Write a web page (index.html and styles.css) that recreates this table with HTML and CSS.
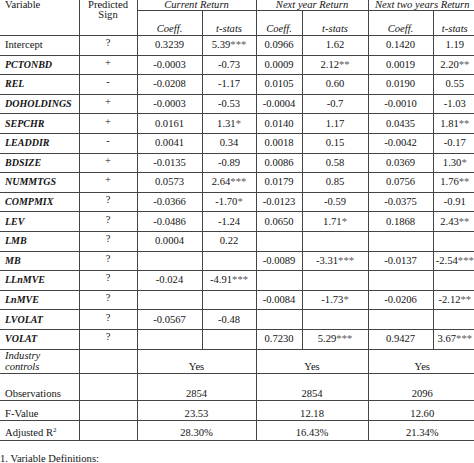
FILE: index.html
```html
<!DOCTYPE html>
<html lang="en">
<head>
<meta charset="utf-8">
<title>Regression results</title>
<link rel="stylesheet" href="styles.css">
</head>
<body>
<table class="results">
  <colgroup>
    <col class="c-var"><col class="c-sign">
    <col class="c-3"><col class="c-4">
    <col class="c-5"><col class="c-6">
    <col class="c-7"><col class="c-8">
  </colgroup>
  <thead>
    <tr class="h1">
      <th rowspan="2" class="var">Variable</th>
      <th rowspan="2" class="sign-h">Predicted<br>Sign</th>
      <th colspan="2" class="grp">Current Return</th>
      <th colspan="2" class="grp">Next year Return</th>
      <th colspan="2" class="grp last">Next two years Return</th>
    </tr>
    <tr class="h2">
      <th class="sub">Coeff.</th><th class="sub">t-stats</th>
      <th class="sub">Coeff.</th><th class="sub">t-stats</th>
      <th class="sub">Coeff.</th><th class="sub last">t-stats</th>
    </tr>
  </thead>
  <tbody>
    <tr><td class="var plain">Intercept</td><td class="sign">?</td><td>0.3239</td><td>5.39<span class="st">***</span></td><td>0.0966</td><td>1.62</td><td>0.1420</td><td class="last">1.19</td></tr>
    <tr><td class="var">PCTONBD</td><td class="sign">+</td><td>-0.0003</td><td>-0.73</td><td>0.0009</td><td>2.12<span class="st">**</span></td><td>0.0019</td><td class="last">2.20<span class="st">**</span></td></tr>
    <tr><td class="var">REL</td><td class="sign">-</td><td>-0.0208</td><td>-1.17</td><td>0.0105</td><td>0.60</td><td>0.0190</td><td class="last">0.55</td></tr>
    <tr><td class="var">DOHOLDINGS</td><td class="sign">+</td><td>-0.0003</td><td>-0.53</td><td>-0.0004</td><td>-0.7</td><td>-0.0010</td><td class="last">-1.03</td></tr>
    <tr><td class="var">SEPCHR</td><td class="sign">+</td><td>0.0161</td><td>1.31<span class="st">*</span></td><td>0.0140</td><td>1.17</td><td>0.0435</td><td class="last">1.81<span class="st">**</span></td></tr>
    <tr><td class="var">LEADDIR</td><td class="sign">-</td><td>0.0041</td><td>0.34</td><td>0.0018</td><td>0.15</td><td>-0.0042</td><td class="last">-0.17</td></tr>
    <tr><td class="var">BDSIZE</td><td class="sign">+</td><td>-0.0135</td><td>-0.89</td><td>0.0086</td><td>0.58</td><td>0.0369</td><td class="last">1.30<span class="st">*</span></td></tr>
    <tr><td class="var">NUMMTGS</td><td class="sign">+</td><td>0.0573</td><td>2.64<span class="st">***</span></td><td>0.0179</td><td>0.85</td><td>0.0756</td><td class="last">1.76<span class="st">**</span></td></tr>
    <tr><td class="var">COMPMIX</td><td class="sign">?</td><td>-0.0366</td><td>-1.70<span class="st">*</span></td><td>-0.0123</td><td>-0.59</td><td>-0.0375</td><td class="last">-0.91</td></tr>
    <tr><td class="var">LEV</td><td class="sign">?</td><td>-0.0486</td><td>-1.24</td><td>0.0650</td><td>1.71<span class="st">*</span></td><td>0.1868</td><td class="last">2.43<span class="st">**</span></td></tr>
    <tr><td class="var">LMB</td><td class="sign">?</td><td>0.0004</td><td>0.22</td><td></td><td></td><td></td><td class="last"></td></tr>
    <tr><td class="var">MB</td><td class="sign">?</td><td></td><td></td><td>-0.0089</td><td>-3.31<span class="st">***</span></td><td>-0.0137</td><td class="last">-2.54<span class="st">***</span></td></tr>
    <tr><td class="var">LLnMVE</td><td class="sign">?</td><td>-0.024</td><td>-4.91<span class="st">***</span></td><td></td><td></td><td></td><td class="last"></td></tr>
    <tr><td class="var">LnMVE</td><td class="sign">?</td><td></td><td></td><td>-0.0084</td><td>-1.73<span class="st">*</span></td><td>-0.0206</td><td class="last">-2.12<span class="st">**</span></td></tr>
    <tr><td class="var">LVOLAT</td><td class="sign">?</td><td>-0.0567</td><td>-0.48</td><td></td><td></td><td></td><td class="last"></td></tr>
    <tr><td class="var">VOLAT</td><td class="sign">?</td><td></td><td></td><td>0.7230</td><td>5.29<span class="st">***</span></td><td>0.9427</td><td class="last">3.67<span class="st">***</span></td></tr>
    <tr class="foot r-ind"><td class="var ital">Industry<br>controls</td><td></td><td colspan="2">Yes</td><td colspan="2">Yes</td><td colspan="2" class="last">Yes</td></tr>
    <tr class="foot r-obs"><td class="var plain">Observations</td><td></td><td colspan="2">2854</td><td colspan="2">2854</td><td colspan="2" class="last">2096</td></tr>
    <tr class="foot r-f"><td class="var plain">F-Value</td><td></td><td colspan="2">23.53</td><td colspan="2">12.18</td><td colspan="2" class="last">12.60</td></tr>
    <tr class="foot r-adj"><td class="var plain">Adjusted R<sup>2</sup></td><td></td><td colspan="2">28.30%</td><td colspan="2">16.43%</td><td colspan="2" class="last">21.34%</td></tr>
  </tbody>
</table>
<p class="note">1. Variable Definitions:</p>
</body>
</html>
```

FILE: styles.css
```css
html, body {
  margin: 0;
  padding: 0;
  overflow: hidden;
  background: #ffffff;
}

body {
  font-family: "Liberation Serif", "Times New Roman", serif;
  font-size: 10.6px;
  color: #141414;
  width: 474px;
  height: 463px;
}

.results {
  border-collapse: collapse;
  table-layout: fixed;
  width: 476px;
}

.c-var { width: 79px; }
.c-sign { width: 58px; }
.c-3 { width: 65px; }
.c-4 { width: 54px; }
.c-5 { width: 46px; }
.c-6 { width: 66px; }
.c-7 { width: 65px; }
.c-8 { width: 43px; }

.results th,
.results td {
  border: 1px solid #444444;
  padding: 0;
  text-align: center;
  font-weight: normal;
  line-height: 12px;
  white-space: nowrap;
}

.results .var {
  border-left: none;
  text-align: left;
  padding-left: 5px;
}

.results .last {
  border-right: none;
}

.results thead tr.h1 th {
  border-top: none;
  vertical-align: top;
  line-height: 10px;
}

.h1 { height: 9px; }
.h2 { height: 25px; }

.results th.sign-h {
  line-height: 12px;
}

.results th.grp,
.results th.sub {
  font-style: italic;
}

.results th.sub {
  vertical-align: bottom;
  padding-bottom: 0;
}

.results tbody tr {
  height: 19.6px;
}

.results tbody td {
  vertical-align: middle;
}

.results td.var {
  font-style: italic;
  font-weight: bold;
  font-size: 10px;
}

.results td.var.plain {
  font-style: normal;
  font-weight: normal;
  font-size: 10.6px;
}

.results td.var.ital {
  font-weight: normal;
  font-size: 10.6px;
  line-height: 11.5px;
}

.results td.sign {
  padding-bottom: 4px;
}

.st {
  color: #5a5a5a;
}

.results tr.foot td {
  vertical-align: bottom;
}

.results tr.r-ind { height: 24px; }
.results tr.r-obs { height: 27px; }
.results tr.r-f { height: 20px; }
.results tr.r-adj { height: 20px; }

.results tr.r-adj td {
  padding-bottom: 1px;
}

sup {
  font-size: 7px;
  line-height: 0;
  vertical-align: 4px;
}

.note {
  margin: 12px 0 0 0;
  line-height: 12px;
}
```
